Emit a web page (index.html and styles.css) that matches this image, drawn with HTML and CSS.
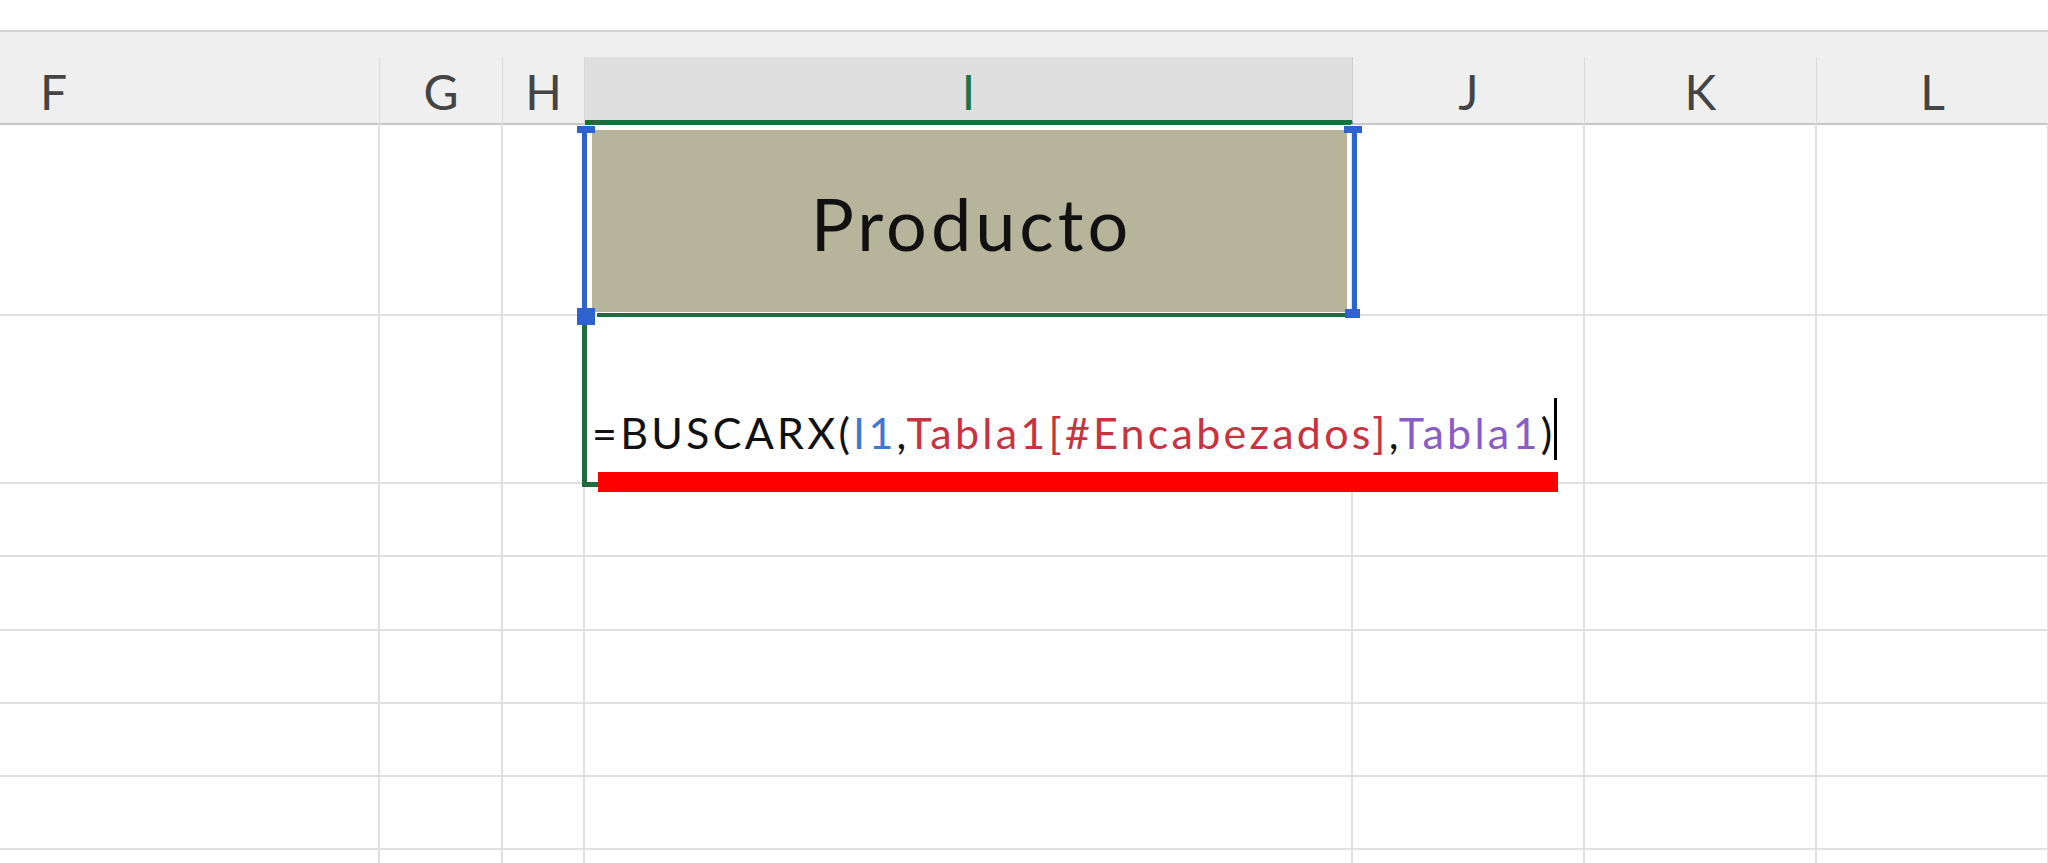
FILE: index.html
```html
<!DOCTYPE html>
<html lang="es">
<head>
  <meta charset="UTF-8">
  <title>BUSCARX encabezados</title>
  <link rel="stylesheet" href="styles.css">
</head>
<body>
  <div class="sheet">
    <div class="gap"></div>

    <div class="colheads">
      <div class="colhead col-f">F</div>
      <div class="colhead">G</div>
      <div class="colhead">H</div>
      <div class="colhead is-selected">I</div>
      <div class="colhead">J</div>
      <div class="colhead">K</div>
      <div class="colhead">L</div>
    </div>

    <div class="grid">
      <!-- fila 1 -->
      <div class="cell"></div>
      <div class="cell"></div>
      <div class="cell"></div>
      <div class="cell title">
        <div class="fill">Producto</div>
        <span class="edge edge-left"></span>
        <span class="edge edge-right"></span>
        <span class="handle h-tl"></span>
        <span class="handle h-tr"></span>
        <span class="handle h-bl"></span>
        <span class="handle h-br"></span>
        <span class="active-bottom"></span>
      </div>
      <div class="cell"></div>
      <div class="cell"></div>
      <div class="cell"></div>

      <!-- fila 2 (editando) -->
      <div class="cell"></div>
      <div class="cell"></div>
      <div class="cell"></div>
      <div class="cell editing">
        <span class="black">=BUSCARX(</span><span class="ref-blue">I1</span><span class="black">,</span><span class="ref-red">Tabla1[#Encabezados]</span><span class="black">,</span><span class="ref-purple">Tabla1</span><span class="black">)</span><span class="caret"></span>
        <span class="active-left"></span>
        <span class="active-stub"></span>
        <span class="mark"></span>
      </div>
      <div class="cell"></div>
      <div class="cell"></div>
      <div class="cell"></div>

      <div class="cell"></div><div class="cell"></div><div class="cell"></div><div class="cell"></div><div class="cell"></div><div class="cell"></div><div class="cell"></div>
      <div class="cell"></div><div class="cell"></div><div class="cell"></div><div class="cell"></div><div class="cell"></div><div class="cell"></div><div class="cell"></div>
      <div class="cell"></div><div class="cell"></div><div class="cell"></div><div class="cell"></div><div class="cell"></div><div class="cell"></div><div class="cell"></div>
      <div class="cell"></div><div class="cell"></div><div class="cell"></div><div class="cell"></div><div class="cell"></div><div class="cell"></div><div class="cell"></div>
      <div class="cell"></div><div class="cell"></div><div class="cell"></div><div class="cell"></div><div class="cell"></div><div class="cell"></div><div class="cell"></div>
      <div class="cell"></div><div class="cell"></div><div class="cell"></div><div class="cell"></div><div class="cell"></div><div class="cell"></div><div class="cell"></div>
    </div>
  </div>
</body>
</html>
```

FILE: styles.css
```css
* {
  box-sizing: border-box;
}

body {
  margin: 0;
  background: #fff;
  font-family: Lato, "Liberation Sans", sans-serif;
  overflow: hidden;
}

.sheet {
  width: 2048px;
  height: 863px;
  overflow: hidden;
}

.gap {
  margin-top: 30px;
  height: 27px;
  border-top: 2px solid #d3d3d3;
  background: #efefef;
}

.colheads,
.grid {
  display: grid;
  grid-template-columns: 380px 123px 82px 768px 232px 232px 232px;
}

.colheads {
  height: 67px;
  background: #efefef;
}

.colhead {
  display: flex;
  align-items: center;
  justify-content: center;
  padding-top: 3px;
  border-right: 1px solid #d8d8d8;
  border-bottom: 2px solid #c6c6c6;
  font-size: 48px;
  color: #444;
}

.col-f {
  justify-content: flex-start;
  padding-left: 40px;
}

.colhead.is-selected {
  background: #dfdfdf;
  color: #217346;
  border-right-color: #cfcfcf;
  border-bottom: 5px solid #1e6b3d;
  padding-top: 6px;
}

.grid {
  grid-template-rows: 192px 168px 73px 74px 73px 73px 73px 73px;
}

.cell {
  position: relative;
  border-right: 2px solid #e0e0e0;
  border-bottom: 2px solid #e0e0e0;
}

/* I1: encabezado de la tabla */
.title {
  z-index: 2;
  padding: 6px 4px 2px 7px;
}

.fill {
  height: 100%;
  display: flex;
  align-items: center;
  justify-content: center;
  padding: 4px 0 0 4px;
  background: #b6b49b;
  font-size: 72px;
  letter-spacing: 4px;
  color: #111;
}

.edge,
.handle,
.active-bottom,
.active-left,
.active-stub,
.mark {
  position: absolute;
}

.edge {
  top: 9px;
  bottom: 4px;
  width: 5px;
  background: #2e62cf;
}

.edge-left { left: -3px; }
.edge-right { left: 767px; }

.handle {
  background: #2e62cf;
}

.h-tl { left: -8px; top: 2px; width: 18px; height: 7px; }
.h-tr { left: 759px; top: 2px; width: 18px; height: 7px; }
.h-bl { left: -8px; top: 184px; width: 18px; height: 17px; }
.h-br { left: 760px; top: 185px; width: 15px; height: 9px; }

.active-bottom {
  left: 12px;
  top: 189px;
  width: 748px;
  height: 4px;
  background: #1e6b3d;
}

/* I2: celda en edición */
.editing {
  z-index: 2;
  border-right: none;
  padding: 95px 0 0 7px;
  white-space: nowrap;
  font-size: 43px;
  line-height: 43px;
  letter-spacing: 3.25px;
}

.black { color: #111; }
.ref-blue { color: #3f78d4; }
.ref-red { color: #c9333f; }
.ref-purple { color: #8a5cc6; }

.caret {
  display: inline-block;
  width: 3px;
  height: 62px;
  margin: -20px 0 0 -1px;
  vertical-align: -11px;
  background: #000;
}

.active-left {
  left: -3px;
  top: 9px;
  width: 5px;
  height: 162px;
  background: #1e6b3d;
}

.active-stub {
  left: -3px;
  top: 166px;
  width: 18px;
  height: 5px;
  background: #1e6b3d;
}

.mark {
  left: 13px;
  top: 156px;
  width: 960px;
  height: 20px;
  background: #ff0000;
}
```
